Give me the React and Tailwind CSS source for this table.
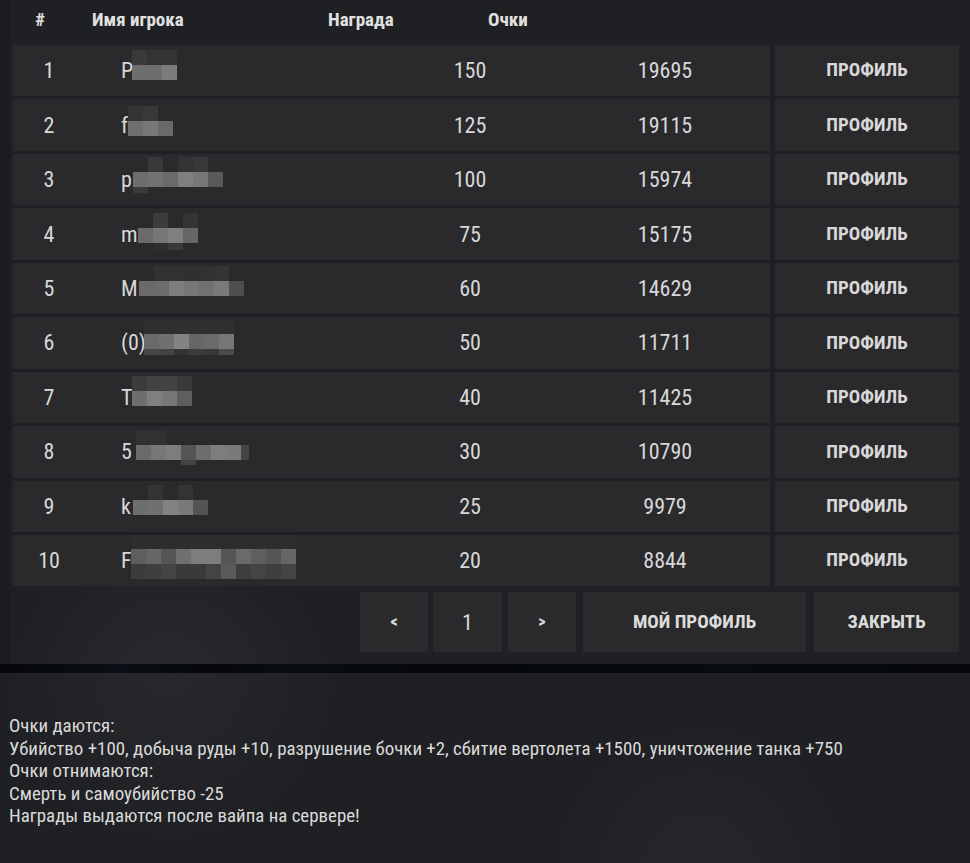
import React from "react";

const rows = [
  { rank: 1, first: "P", reward: 150, score: 19695, mx: 132, m: [
    { y: 5, c: ["#3a3a3c", "#333335", "#333335"] },
    { y: 20, c: ["#6e6e6e", "#6e6e6e", "#7c7c7c"] },
  ] },
  { rank: 2, first: "f", reward: 125, score: 19115, mx: 128, m: [
    { y: 7, c: ["#343436", "#39393b"] },
    { y: 22, c: ["#6f6f6f", "#777777", "#6a6a6a"] },
  ] },
  { rank: 3, first: "p", reward: 100, score: 15974, mx: 133, m: [
    { y: 3, c: [null, "#38383a", null, "#333335", "#38383a"] },
    { y: 18, c: ["#6e6e6e", "#727272", "#6a6a6a", "#7f7f7f", "#777777", "#5a5a5a"] },
    { y: 33, h: 6, c: ["#3a3a3c"] },
  ] },
  { rank: 4, first: "m", reward: 75, score: 15175, mx: 138, m: [
    { y: 5, c: [null, "#3c3c3e", null, "#343436"] },
    { y: 20, c: ["#6a6a6a", "#767676", "#7f7f7f", "#666666"] },
    { y: 35, h: 7, c: [null, "#2e2e30", "#3a3a3c"] },
  ] },
  { rank: 5, first: "M", reward: 60, score: 14629, mx: 139, m: [
    { y: 3, c: [null, "#323234", "#323234", "#303032", "#323234", "#343436"] },
    { y: 18, c: ["#6a6a6a", "#6c6c6c", "#7d7d7d", "#777777", "#717171", "#7a7a7a", "#4e4e50"] },
  ] },
  { rank: 6, first: "(0)", reward: 50, score: 11711, mx: 144, m: [
    { y: 2, c: ["#2f2f32", "#2f2f32", "#2f2f32", "#2f2f32", "#2f2f32", "#2f2f32"] },
    { y: 17, c: ["#6a6a6a", "#707070", "#838383", "#666666", "#6a6a6a", "#777777"] },
    { y: 32, h: 6, c: ["#484848", "#444444", "#333335", "#3c3c3c", "#38383a", "#4a4a4a"] },
  ] },
  { rank: 7, first: "T", reward: 40, score: 11425, mx: 132, m: [
    { y: 4, c: ["#3c3c3e", "#434345", "#434345", "#3a3a3c"] },
    { y: 19, c: ["#6e6e6e", "#7f7f7f", "#777777", "#5e5e5e"] },
  ] },
  { rank: 8, first: "5", reward: 30, score: 10790, mx: 136, m: [
    { y: 4, c: ["#313134", "#313134"] },
    { y: 19, c: ["#6a6a6a", "#777777", "#7d7d7d", "#555555", "#6e6e6e", "#7d7d7d", "#7a7a7a", ["#444446", 8]] },
    { y: 34, h: 5, c: [null, null, null, "#444444"] },
  ] },
  { rank: 9, first: "k", reward: 25, score: 9979, mx: 133, m: [
    { y: 4, c: [null, "#333335", null, "#333335"] },
    { y: 19, c: ["#6e6e6e", "#707070", "#828282", "#7a7a7a", "#545454"] },
  ] },
  { rank: 10, first: "F", reward: 20, score: 8844, mx: 131, m: [
    { y: 0, c: ["#2d2d30", "#2d2d30", "#2d2d30", "#2d2d30", "#2d2d30", "#2d2d30", "#2d2d30", "#2d2d30", "#2d2d30", "#2d2d30", "#2d2d30"] },
    { y: 14, c: ["#5e5e5e", "#666666", "#555555", "#707070", "#7d7d7d", "#7d7d7d", "#555555", "#6a6a6a", "#5e5e5e", "#555555", "#666666"] },
    { y: 29, c: ["#3c3c3e", "#3e3e40", "#444444", "#3a3a3c", "#3a3a3c", "#444444", "#5a5a5a", "#3e3e40", "#444444", "#3e3e40", "#444444"] },
  ] },
];

function Mosaic({ mx, m }) {
  return (
    <>
      {m.map((r, i) => (
        <div
          key={i}
          className="absolute flex"
          style={{ left: mx - 13, top: r.y, height: r.h || 15 }}
        >
          {r.c.map((c, j) => {
            const color = Array.isArray(c) ? c[0] : c;
            const w = Array.isArray(c) ? c[1] : 15;
            return (
              <div
                key={j}
                style={{ width: w, height: r.h || 15, background: color || "transparent" }}
              />
            );
          })}
        </div>
      ))}
    </>
  );
}

export default function App() {
  return (
    <div
      className="w-[970px] h-[863px] overflow-hidden bg-[#1f2023] text-[#d8d8d8]"
      style={{ fontFamily: "'Roboto Condensed', Roboto, 'Noto Sans', sans-serif" }}
    >
      <div className="h-[664px] bg-[linear-gradient(to_right,#1b1c1f_0px,#1b1c1f_10px,#1f2023_10px)] bg-[#1f2023] relative">
        <div className="absolute inset-0 pointer-events-none bg-[radial-gradient(circle_at_170px_690px,rgba(255,255,255,0.05),rgba(255,255,255,0)_160px)]" />
        <div className="relative">
          {/* header */}
          <div className="flex h-[45px] items-center pb-[5px] text-[19px] font-bold text-[#e0e0e0]">
            <div className="w-[92px] pl-[35px]">#</div>
            <div className="w-[236px]">Имя игрока</div>
            <div className="w-[160px]">Награда</div>
            <div>Очки</div>
          </div>
          {/* rows */}
          <div className="flex flex-col gap-[3px] pl-[13px]">
            {rows.map((r) => (
              <div key={r.rank} className="flex h-[51.44px] gap-[5px]">
                <div className="relative flex w-[757px] items-center bg-[#2a2a2d] text-[22px]">
                  <div className="w-[72px] text-center">{r.rank}</div>
                  <div className="w-[295px] pl-[36px]">{r.first}</div>
                  <div className="w-[180px] text-center">{r.reward}</div>
                  <div className="w-[210px] text-center">{r.score}</div>
                  <Mosaic mx={r.mx} m={r.m} />
                </div>
                <div className="flex w-[184px] items-center justify-center bg-[#2a2a2d] text-[19px] font-bold">
                  ПРОФИЛЬ
                </div>
              </div>
            ))}
          </div>
          {/* buttons */}
          <div className="mt-[6px] flex h-[60px] pl-[360px] text-[#dcdcdc]">
            <div className="flex w-[68px] items-center justify-center bg-[#2a2a2d] text-[16px] font-bold">&lt;</div>
            <div className="ml-[5px] flex w-[69px] items-center justify-center bg-[#2a2a2d] text-[22px]">1</div>
            <div className="ml-[6px] flex w-[68px] items-center justify-center bg-[#2a2a2d] text-[16px] font-bold">&gt;</div>
            <div className="ml-[7px] flex w-[223px] items-center justify-center bg-[#2a2a2d] text-[19px] font-bold">МОЙ ПРОФИЛЬ</div>
            <div className="ml-[8px] flex w-[145px] items-center justify-center bg-[#2a2a2d] text-[19px] font-bold">ЗАКРЫТЬ</div>
          </div>
        </div>
      </div>
      <div className="h-[9px] bg-[linear-gradient(to_right,#05070b_0%,#0b0e14_12%,#05070b_22%,#0a0d12_30%,#05070b_45%,#080b10_75%,#05070b_100%)]" />
      <div className="relative h-[190px] bg-[#1f2023]">
        <div className="absolute inset-0 pointer-events-none bg-[radial-gradient(circle_at_170px_0px,rgba(255,255,255,0.04),rgba(255,255,255,0)_170px),radial-gradient(circle_at_700px_200px,rgba(255,255,255,0.035),rgba(255,255,255,0)_150px)]" />
        <div className="relative pl-[9px] pt-[42px] text-[18.9px] leading-[22.5px] text-[#dadada]">
          <div>Очки даются:</div>
          <div>Убийство +100, добыча руды +10, разрушение бочки +2, сбитие вертолета +1500, уничтожение танка +750</div>
          <div>Очки отнимаются:</div>
          <div>Смерть и самоубийство -25</div>
          <div>Награды выдаются после вайпа на сервере!</div>
        </div>
      </div>
    </div>
  );
}
